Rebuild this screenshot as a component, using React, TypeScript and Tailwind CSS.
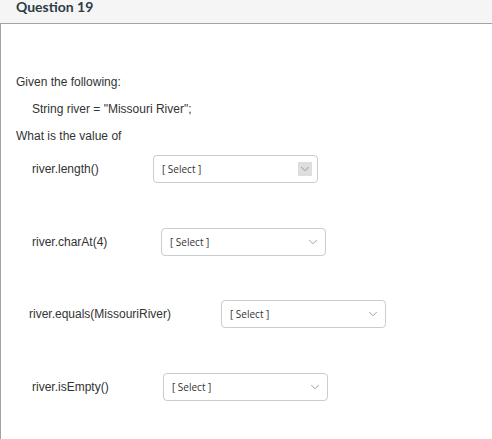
import { ChevronDown } from "lucide-react"

interface Row {
  label: string
  labelWidth: string
  pl: string
  mt: string
  hover?: boolean
}

const rows: Row[] = [
  { label: "river.length()", labelWidth: "w-[121px]", pl: "pl-[31px]", mt: "mt-[12px]", hover: true },
  { label: "river.charAt(4)", labelWidth: "w-[129px]", pl: "pl-[31px]", mt: "mt-[45px]" },
  { label: "river.equals(MissouriRiver)", labelWidth: "w-[192px]", pl: "pl-[28px]", mt: "mt-[44px]" },
  { label: "river.isEmpty()", labelWidth: "w-[131px]", pl: "pl-[31px]", mt: "mt-[45px]" },
]

function SelectBox({ hover }: { hover?: boolean }) {
  return (
    <div className="flex h-[28px] w-[165px] items-center justify-between rounded-[4px] border border-[#c7cdd1] bg-white pl-[8px] pr-[5px]">
      <span className="text-[10px] text-[#333] [font-family:'Open_Sans',sans-serif]">[ Select ]</span>
      <span
        className={`flex h-[14px] w-[14px] items-center justify-center ${hover ? "bg-[#dedede]" : ""}`}
      >
        <ChevronDown className="h-[14px] w-[14px] text-[#8a8a8a]" strokeWidth={1.4} />
      </span>
    </div>
  )
}

export default function App() {
  return (
    <div className="h-[439px] w-[492px] overflow-hidden bg-white [font-family:'Liberation_Sans',Arial,sans-serif]">
      {/* Header */}
      <div className="flex h-[24px] items-start border-b border-[#a3a3a3] bg-[#f5f5f5] pl-[16px]">
        <h2 className="mt-[-2px] text-[14px] font-bold leading-[18px] text-[#2d3b45] [font-family:Lato,sans-serif]">
          Question 19
        </h2>
      </div>

      {/* Body */}
      <div className="h-[415px] border-l border-[#a3a3a3] pt-[51px] text-[12px] leading-[14px] text-[#333]">
        <p className="pl-[15px]">Given the following:</p>
        <p className="mt-[13px] pl-[31px]">String river = "Missouri River";</p>
        <p className="mt-[13px] pl-[15px]">What is the value of</p>

        {rows.map((row) => (
          <div key={row.label} className={`flex items-center ${row.mt} ${row.pl}`}>
            <span className={`${row.labelWidth} shrink-0`}>{row.label}</span>
            <SelectBox hover={row.hover} />
          </div>
        ))}
      </div>
    </div>
  )
}
